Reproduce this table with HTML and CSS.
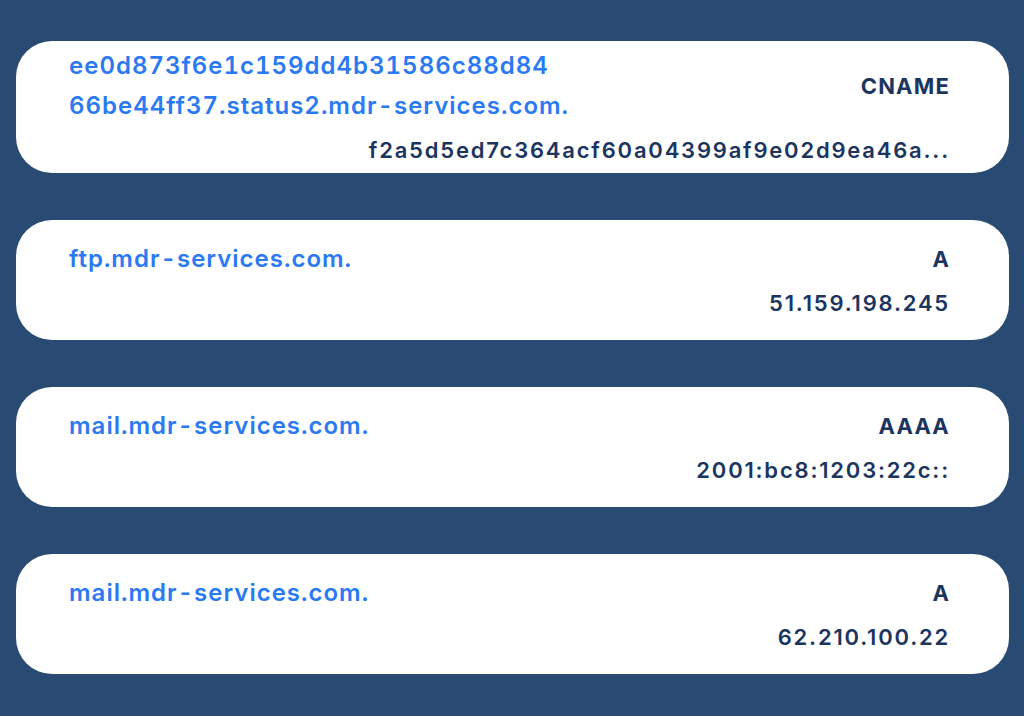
FILE: index.html
```html
<!DOCTYPE html>
<html lang="en">
<head>
    <meta charset="UTF-8">
    <meta name="viewport" content="width=device-width, initial-scale=1.0">
    <title>DNS Records</title>
    <link rel="stylesheet" href="styles.css">
</head>
<body>
    <div class="records">
        <div class="record">
            <div class="top">
                <div class="name long">ee0d873f6e1c159dd4b31586c88d84<wbr>66be44ff37.status2.mdr-services.com.</div>
                <div class="type">CNAME</div>
            </div>
            <div class="value">f2a5d5ed7c364acf60a04399af9e02d9ea46a...</div>
        </div>

        <div class="record">
            <div class="top">
                <div class="name">ftp.mdr-services.com.</div>
                <div class="type">A</div>
            </div>
            <div class="value">51.159.198.245</div>
        </div>

        <div class="record">
            <div class="top">
                <div class="name">mail.mdr-services.com.</div>
                <div class="type">AAAA</div>
            </div>
            <div class="value">2001:bc8:1203:22c::</div>
        </div>

        <div class="record">
            <div class="top">
                <div class="name">mail.mdr-services.com.</div>
                <div class="type">A</div>
            </div>
            <div class="value">62.210.100.22</div>
        </div>
    </div>
</body>
</html>
```

FILE: styles.css
```css
* {
    margin: 0;
    padding: 0;
    box-sizing: border-box;
}

body {
    background: #284a73;
    font-family: Inter, "Noto Sans", sans-serif;
    min-height: 100vh;
}

.records {
    display: flex;
    flex-direction: column;
    gap: 47px;
    padding: 41px 15px 0 16px;
}

.record {
    background: #fff;
    border-radius: 36px;
    min-height: 120px;
    padding: 5px 59px 7px 53px;
    display: flex;
    flex-direction: column;
    justify-content: center;
    gap: 8px;
}

.top {
    display: flex;
    align-items: center;
    justify-content: space-between;
}

.name {
    color: #2b79f3;
    font-size: 24px;
    font-weight: 600;
    letter-spacing: 1px;
    line-height: 40px;
    font-variant-numeric: tabular-nums;
}

.name.long {
    max-width: 515px;
}

.type {
    color: #1b355f;
    font-size: 22px;
    font-weight: 700;
    letter-spacing: 1.2px;
}

.value {
    color: #1b355f;
    font-size: 22px;
    font-weight: 600;
    letter-spacing: 1.8px;
    line-height: 32px;
    text-align: right;
}
```
